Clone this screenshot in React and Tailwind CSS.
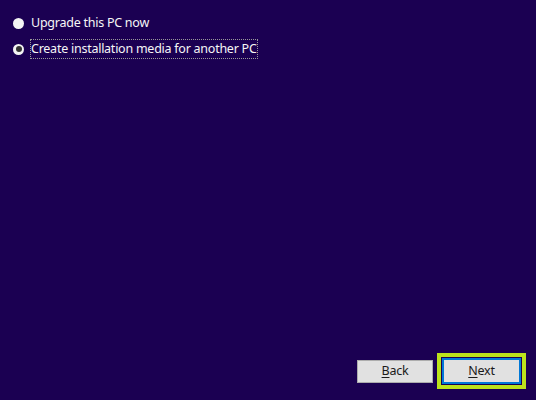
export default function App() {
  const font = { fontFamily: '"Noto Sans", "Open Sans", sans-serif' };
  return (
    <div
      className="w-[536px] h-[400px] bg-[#1b0052] flex flex-col justify-between text-[#f6f6f6] text-[12.5px] tracking-[-0.25px] overflow-hidden"
      style={font}
    >
      <div className="flex flex-col gap-[6px] pt-[13px] pl-[13px]">
        <div className="flex items-center h-[20px]">
          <span className="w-[11px] h-[11px] rounded-full bg-[#f4f4f4] shrink-0" />
          <span className="ml-[6px] px-0 h-[20px] leading-[18px] border border-transparent">Upgrade this PC now</span>
        </div>
        <div className="flex items-center h-[20px]">
          <span className="w-[11px] h-[11px] rounded-full bg-[#f4f4f4] shrink-0 flex items-center justify-center">
            <span className="w-[6px] h-[6px] rounded-full bg-[#333333]" />
          </span>
          <span className="ml-[6px] px-0 h-[20px] leading-[18px] border border-dotted border-[#9a9a9a]">
            Create installation media for another PC
          </span>
        </div>
      </div>
      <div className="flex justify-end items-center gap-[4px] pr-[10px] pb-[11px]">
        <button className="w-[76px] h-[23px] bg-[#e1e1e1] border border-[#adadad] text-[#1a1a1a] text-[12.5px] leading-none flex items-center justify-center" style={font}>
          <span><span className="underline underline-offset-2">B</span>ack</span>
        </button>
        <div className="w-[89px] h-[36px] border-[4px] border-[#bce21c] bg-[#1b0052] p-[1px]">
          <button className="w-full h-full bg-[#e1e1e1] border-[2px] border-[#0078d7] text-[#1a1a1a] text-[12.5px] leading-none flex items-center justify-center" style={font}>
            <span><span className="underline underline-offset-2">N</span>ext</span>
          </button>
        </div>
      </div>
    </div>
  );
}
